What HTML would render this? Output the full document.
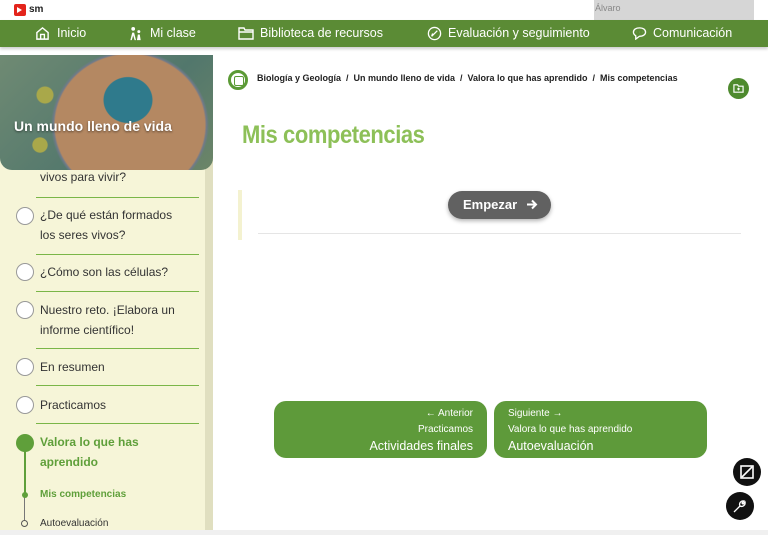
<!DOCTYPE html>
<html><head><meta charset="utf-8"><style>
*{margin:0;padding:0;box-sizing:border-box}
body{width:768px;height:535px;overflow:hidden;background:#fff;font-family:"Liberation Sans",sans-serif;position:relative}
.top{position:absolute;left:0;top:0;width:768px;height:20px;background:#fff}
.logo{position:absolute;left:14px;top:4px;width:12px;height:12px;background:#e3241b;border-radius:2px}
.logo:after{content:"";position:absolute;left:3px;top:3px;border-left:5px solid #fff;border-top:3px solid transparent;border-bottom:3px solid transparent}
.sm{position:absolute;left:29px;top:4px;font-size:10px;font-weight:bold;color:#222}
.user{position:absolute;left:594px;top:0;width:160px;height:20px;background:#d6d6d6;font-size:9px;color:#888;padding:3px 1px}
.nav{position:absolute;left:0;top:20px;width:768px;height:27px;background:#5b8b35;color:#fff;font-size:12.5px;box-shadow:0 2px 3px rgba(0,0,0,.2)}
.nav span{position:absolute;top:6px}
.nav svg{position:absolute;top:6px}
.side{position:absolute;left:0;top:55px;width:213px;height:475px;background:#f6f5d8;overflow:hidden}
.strip{position:absolute;left:205px;top:0;width:8px;height:475px;background:#e0dfc0}
.hero{position:absolute;left:0;top:0;width:213px;height:115px;border-radius:0 0 12px 12px;overflow:hidden;
background:radial-gradient(ellipse 32px 30px at 128px 45px,#2f7a8c 75%,transparent 78%),radial-gradient(ellipse 85px 80px at 130px 70px,#b48862 88%,#6f7a8a 90%,transparent 93%),radial-gradient(circle 9px at 40px 90px,#a9a84a 80%,transparent 90%),radial-gradient(circle 10px at 45px 40px,#a9a84a 80%,transparent 90%),linear-gradient(135deg,#6f8a73,#52776c 60%,#6c8568)}
.hero b{position:absolute;left:14px;top:63px;color:#fff;font-size:14px;text-shadow:0 1px 2px rgba(0,0,0,.5)}
.it{position:absolute;left:40px;font-size:12px;color:#333;line-height:20px;width:150px}
.ln{position:absolute;left:36px;width:163px;height:1px;background:#7ab648}
.c{position:absolute;left:16px;width:18px;height:18px;border-radius:50%;background:#fff;border:1px solid #999}
.bcic{position:absolute;left:228px;top:70px;width:20px;height:20px;border:3px solid #5b9a35;border-radius:50%}
.bcic:after{content:"";position:absolute;left:3px;top:3px;width:8px;height:8px;border:1.5px solid #5b9a35;border-radius:2px}
.bc{position:absolute;left:257px;top:73px;font-size:9px;font-weight:bold;color:#222}
.fold{position:absolute;left:728px;top:78px;width:21px;height:21px;border-radius:50%;background:#4e8a2e}
h1{position:absolute;left:242px;top:121px;font-size:25px;color:#8dc058;font-weight:bold;letter-spacing:-.5px;transform:scaleX(.88);transform-origin:left}
.bar{position:absolute;left:238px;top:190px;width:4px;height:50px;background:#f4f2d0}
.hr{position:absolute;left:258px;top:233px;width:483px;height:1px;background:#e5e5e5}
.emp{position:absolute;left:448px;top:191px;width:103px;height:28px;border-radius:14px;background:#616161;color:#fff;font-size:13px;font-weight:bold;padding:6px 0 0 15px;white-space:nowrap;box-shadow:0 2px 4px rgba(0,0,0,.3)}
.nb{position:absolute;top:401px;height:57px;width:213px;border-radius:12px;background:#5e9a3a;color:#fff;font-size:10px;line-height:16px;padding:5px 14px}
.nb .big{font-size:12.5px}
.fab{position:absolute;width:28px;height:28px;border-radius:50%;background:#111}
.bot{position:absolute;left:0;top:530px;width:768px;height:5px;background:#f0f0f0}
</style></head><body>
<div class="top"><div class="logo"></div><div class="sm">sm</div><div class="user">Álvaro</div></div>
<div class="nav">
<svg style="left:35px" width="15" height="15" viewBox="0 0 16 16" fill="none" stroke="#fff" stroke-width="1.5"><path d="M2 7L8 2l6 5v7H2z M6 14V9h4v5"/></svg><span style="left:57px">Inicio</span>
<svg style="left:128px" width="16" height="15" viewBox="0 0 16 16" fill="#fff"><circle cx="5" cy="3" r="2"/><circle cx="11" cy="6" r="1.6"/><path d="M2 15l2-8h2l2 8h-1.5L5 10l-1.5 5zM9 15l1-6h2l1 6z"/></svg><span style="left:150px">Mi clase</span>
<svg style="left:238px" width="16" height="14" viewBox="0 0 16 14" fill="none" stroke="#fff" stroke-width="1.4"><path d="M1 2h5l1 2h8v9H1z M1 6h14"/></svg><span style="left:260px">Biblioteca de recursos</span>
<svg style="left:427px" width="15" height="15" viewBox="0 0 16 16" fill="none" stroke="#fff" stroke-width="1.4"><circle cx="8" cy="8" r="6.5"/><path d="M5 11l6-6M5 11l1-3"/></svg><span style="left:448px">Evaluación y seguimiento</span>
<svg style="left:632px" width="15" height="14" viewBox="0 0 16 15" fill="none" stroke="#fff" stroke-width="1.4"><path d="M8 2c4 0 6.5 2 6.5 4.5S12 11 8 11l-4 3v-3.5C2.5 9.5 1.5 8 1.5 6.5 1.5 4 4 2 8 2z"/><path d="M5 6.5h.1M8 6.5h.1M11 6.5h.1"/></svg><span style="left:653px">Comunicación</span>
</div>
<div class="side">
<div class="strip"></div>
<div class="it" style="top:112px">vivos para vivir?</div>
<div class="ln" style="top:142px"></div>
<div class="c" style="top:152px"></div><div class="it" style="top:150px">¿De qué están formados los seres vivos?</div>
<div class="ln" style="top:199px"></div>
<div class="c" style="top:208px"></div><div class="it" style="top:207px">¿Cómo son las células?</div>
<div class="ln" style="top:236px"></div>
<div class="c" style="top:246px"></div><div class="it" style="top:245px">Nuestro reto. ¡Elabora un informe científico!</div>
<div class="ln" style="top:293px"></div>
<div class="c" style="top:303px"></div><div class="it" style="top:302px">En resumen</div>
<div class="ln" style="top:330px"></div>
<div class="c" style="top:341px"></div><div class="it" style="top:340px">Practicamos</div>
<div class="ln" style="top:368px"></div>
<div style="position:absolute;left:16px;top:379px;width:18px;height:18px;border-radius:50%;background:#5f9f3a"></div>
<div style="position:absolute;left:24px;top:390px;width:2px;height:50px;background:#5f9f3a"></div>
<div style="position:absolute;left:24px;top:440px;width:1px;height:25px;background:#777"></div>
<div style="position:absolute;left:22px;top:437px;width:6px;height:6px;border-radius:50%;background:#5f9f3a"></div>
<div style="position:absolute;left:21px;top:465px;width:7px;height:7px;border-radius:50%;border:1px solid #555;background:#f6f5d8"></div>
<div class="it" style="top:377px;color:#5f9f3a;font-weight:bold;width:120px">Valora lo que has aprendido</div>
<div class="it" style="top:430px;color:#5f9f3a;font-weight:bold;font-size:10px">Mis competencias</div>
<div class="it" style="top:459px;font-size:10px">Autoevaluación</div>
<div class="hero"><b>Un mundo lleno de vida</b></div>
</div>
<div class="bcic"></div>
<div class="bc">Biología y Geología &nbsp;/&nbsp; Un mundo lleno de vida &nbsp;/&nbsp; Valora lo que has aprendido &nbsp;/&nbsp; Mis competencias</div>
<div class="fold"><svg style="position:absolute;left:5px;top:5px" width="11" height="11" viewBox="0 0 12 12" fill="none" stroke="#fff" stroke-width="1.3"><path d="M1 2h4l1 1.5h5V10H1z M6 5v3M4.5 6.5h3"/></svg></div>
<h1>Mis competencias</h1>
<div class="bar"></div>
<div class="emp">Empezar <svg style="vertical-align:-1px;margin-left:5px" width="12" height="11" viewBox="0 0 12 11" fill="none" stroke="#fff" stroke-width="2"><path d="M1 5.5h9M6 1.5l4 4-4 4"/></svg></div>
<div class="hr"></div>
<div class="nb" style="left:274px;text-align:right">← Anterior<br>Practicamos<br><span class="big">Actividades finales</span></div>
<div class="nb" style="left:494px">Siguiente →<br>Valora lo que has aprendido<br><span class="big">Autoevaluación</span></div>
<div class="fab" style="left:733px;top:458px"><svg style="position:absolute;left:7px;top:7px" width="14" height="14" viewBox="0 0 14 14" fill="none" stroke="#fff" stroke-width="1.6"><rect x="1" y="1" width="12" height="12"/><path d="M2 12L12 2"/></svg></div>
<div class="fab" style="left:726px;top:492px"><svg style="position:absolute;left:6px;top:6px" width="16" height="16" viewBox="0 0 16 16" fill="none" stroke="#fff" stroke-width="1.3"><path d="M2 14l6-6a3.5 3.5 0 0 1 4-5l-2 2 1 1 2-2a3.5 3.5 0 0 1-5 4l-6 6z"/></svg></div>
<div class="bot"></div>
</body></html>
